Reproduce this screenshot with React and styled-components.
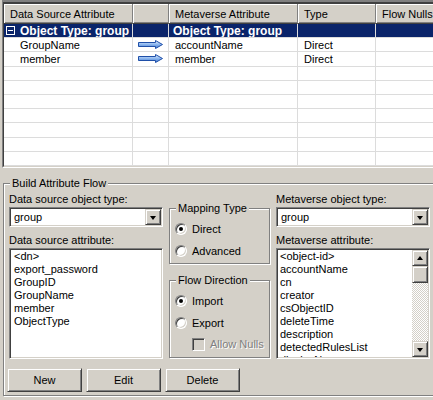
import React from "react";
import styled, { createGlobalStyle } from "styled-components";

const GlobalStyle = createGlobalStyle`
  html, body { margin: 0; padding: 0; background: #d4d0c8; }
  body {
    font-family: "Liberation Sans", Arial, sans-serif;
    font-size: 11px;
    color: #000;
  }
`;

const Window = styled.div`
  width: 433px;
  height: 400px;
  overflow: hidden;
  background: #d4d0c8;
`;

/* ---------- attribute flow grid ---------- */

const GridOuter = styled.div`
  margin-left: 2px;
  width: 470px;
  height: 168px;
  box-sizing: border-box;
  border-top: 2px solid #808080;
  border-left: 1px solid #808080;
  border-bottom: 1px solid #fff;
`;

const GridInner = styled.div`
  height: 100%;
  box-sizing: border-box;
  border-top: 2px solid #404040;
  border-left: 1px solid #404040;
  border-bottom: 1px solid #d4d0c8;
  background: #fff;
  overflow: hidden;
`;

const HeaderRow = styled.div`
  display: flex;
  height: 20px;
`;

const HeaderCell = styled.div`
  flex: none;
  width: ${(p) => p.$w}px;
  box-sizing: border-box;
  display: flex;
  align-items: center;
  padding-left: 6px;
  background: #d4d0c8;
  border-right: 1px solid #808080;
  border-bottom: 1px solid #404040;
  box-shadow: inset 1px 1px #fff, inset 0 -1px #808080;
  white-space: nowrap;
  overflow: hidden;
`;

const Row = styled.div`
  display: flex;
  height: 14.2px;
  box-sizing: border-box;
  border-bottom: 1px solid #dcdcdc;
  background: ${(p) => (p.$selected ? "#0a246a" : "#fff")};
  color: ${(p) => (p.$selected ? "#fff" : "#000")};
  font-weight: ${(p) => (p.$selected ? "bold" : "normal")};
  font-size: ${(p) => (p.$selected ? "12px" : "11px")};
`;

const Cell = styled.div`
  flex: none;
  width: ${(p) => p.$w}px;
  box-sizing: border-box;
  display: flex;
  align-items: center;
  justify-content: ${(p) => (p.$center ? "center" : "flex-start")};
  padding-left: ${(p) => (p.$center ? 0 : p.$pad ?? 6)}px;
  border-right: 1px solid #dcdcdc;
  white-space: nowrap;
  overflow: hidden;
`;

const Collapse = styled.span`
  position: relative;
  flex: none;
  width: 9px;
  height: 9px;
  box-sizing: border-box;
  border: 1px solid #fff;
  margin: 0 5px 0 2px;

  &::after {
    content: "";
    position: absolute;
    left: 1px;
    top: 3px;
    width: 5px;
    height: 1px;
    background: #fff;
  }
`;

const Arrow = () => (
  <svg width="25" height="9" viewBox="0 0 25 9">
    <defs>
      <linearGradient id="arr" x1="0" y1="0" x2="0" y2="1">
        <stop offset="0" stopColor="#e8f2ff" />
        <stop offset="0.5" stopColor="#8cb6ee" />
        <stop offset="1" stopColor="#3c74cc" />
      </linearGradient>
    </defs>
    <path
      d="M0.5 2.5 H17.5 V0.5 L24.5 4.5 L17.5 8.5 V6.5 H0.5 Z"
      fill="url(#arr)"
      stroke="#1f4fa8"
      strokeWidth="1"
    />
  </svg>
);

/* ---------- build attribute flow ---------- */

const GroupBox = styled.div`
  position: relative;
  box-sizing: border-box;
  border: 1px solid #808080;
  box-shadow: inset 1px 1px #fff, 1px 1px #fff;
`;

const MainBox = styled(GroupBox)`
  margin: 15px 0 0 3px;
  width: 470px;
  padding: 9px 0 3px 5px;
`;

const SmallBox = styled(GroupBox)`
  margin-top: ${(p) => p.$top}px;
  padding: 9px 0 ${(p) => p.$bottom}px 5px;
`;

const Legend = styled.span`
  position: absolute;
  top: -7px;
  left: 6px;
  padding: 0 2px;
  line-height: 13px;
  background: #d4d0c8;
  white-space: nowrap;
`;

const Columns = styled.div`
  display: flex;
  gap: 6px;
`;

const Column = styled.div`
  display: flex;
  flex-direction: column;
  width: ${(p) => p.$w}px;
`;

const Label = styled.div`
  height: 13px;
  line-height: 13px;
  margin-top: ${(p) => p.$top || 0}px;
  margin-bottom: 1px;
  white-space: nowrap;
`;

const sunken = `
  border: 1px solid;
  border-color: #808080 #fff #fff #808080;
  box-shadow: inset 1px 1px #404040, inset -1px -1px #d4d0c8;
`;

const raised = `
  background: #d4d0c8;
  border: 1px solid;
  border-color: #d4d0c8 #404040 #404040 #d4d0c8;
  box-shadow: inset 1px 1px #fff, inset -1px -1px #808080;
`;

const Combo = styled.div`
  ${sunken}
  display: flex;
  align-items: center;
  height: 20px;
  box-sizing: border-box;
  padding: 1px;
  background: #fff;
`;

const ComboText = styled.span`
  flex: 1;
  padding-left: 3px;
`;

const ArrowButton = styled.div`
  ${raised}
  flex: none;
  width: 16px;
  height: 16px;
  box-sizing: border-box;
  display: flex;
  align-items: center;
  justify-content: center;

  &::after {
    content: "";
    width: 0;
    height: 0;
    border-left: 3.5px solid transparent;
    border-right: 3.5px solid transparent;
    ${(p) =>
      p.$up
        ? "border-bottom: 4px solid #000; margin-top: -1px;"
        : "border-top: 4px solid #000; margin-top: 1px;"}
  }
`;

const ListBox = styled.div`
  ${sunken}
  display: flex;
  height: 111px;
  box-sizing: border-box;
  padding: 1px;
  background: #fff;
`;

const Items = styled.div`
  flex: 1;
  padding-left: ${(p) => p.$pad}px;
  overflow: hidden;
`;

const Item = styled.div`
  height: 13px;
  line-height: 13px;
  white-space: nowrap;
`;

const ScrollBar = styled.div`
  flex: none;
  width: 16px;
  display: flex;
  flex-direction: column;
`;

const Thumb = styled.div`
  ${raised}
  height: 17px;
  box-sizing: border-box;
`;

const Track = styled.div`
  flex: 1;
  background: repeating-conic-gradient(#d4d0c8 0 25%, #fff 0 50%) 0 0 / 2px 2px;
`;

const OptionRow = styled.div`
  display: flex;
  align-items: center;
  height: ${(p) => p.$h || 22}px;
  white-space: nowrap;
  color: ${(p) => (p.$disabled ? "#808080" : "#000")};
  text-shadow: ${(p) => (p.$disabled ? "1px 1px #fff" : "none")};
`;

const Radio = styled.span`
  position: relative;
  flex: none;
  width: 12px;
  height: 12px;
  box-sizing: border-box;
  margin-right: 5px;
  border-radius: 50%;
  border: 1px solid;
  border-color: #808080 #fff #fff #808080;
  box-shadow: inset 1px 1px #404040, inset -1px -1px #d4d0c8;
  background: #fff;

  &::after {
    content: "";
    display: ${(p) => (p.$checked ? "block" : "none")};
    position: absolute;
    left: 3px;
    top: 3px;
    width: 4px;
    height: 4px;
    border-radius: 50%;
    background: #000;
  }
`;

const CheckBox = styled.span`
  flex: none;
  width: 13px;
  height: 13px;
  box-sizing: border-box;
  margin: 0 5px 0 17px;
  ${sunken}
  background: #d4d0c8;
`;

const ButtonRow = styled.div`
  display: flex;
  gap: 4px;
  margin: 9px 0 0 -2px;
`;

const PushButton = styled.div`
  ${raised}
  width: 75px;
  height: 24px;
  box-sizing: border-box;
  display: flex;
  align-items: center;
  justify-content: center;
`;

const cols = [129, 36, 129, 78, 98];

const flows = [
  { src: "GroupName", mv: "accountName", type: "Direct" },
  { src: "member", mv: "member", type: "Direct" },
];

const sourceAttrs = ["<dn>", "export_password", "GroupID", "GroupName", "member", "ObjectType"];

const mvAttrs = [
  "<object-id>",
  "accountName",
  "cn",
  "creator",
  "csObjectID",
  "deleteTime",
  "description",
  "detectedRulesList",
  "displayName",
];

const App = () => {
  return (
    <Window>
      <GlobalStyle />
      <GridOuter>
        <GridInner>
          <HeaderRow>
            <HeaderCell $w={cols[0]}>Data Source Attribute</HeaderCell>
            <HeaderCell $w={cols[1]} />
            <HeaderCell $w={cols[2]}>Metaverse Attribute</HeaderCell>
            <HeaderCell $w={cols[3]}>Type</HeaderCell>
            <HeaderCell $w={cols[4]}>Flow Nulls</HeaderCell>
          </HeaderRow>
          <Row $selected>
            <Cell $w={cols[0]} $pad={0}>
              <Collapse />
              Object Type: group
            </Cell>
            <Cell $w={cols[1]} />
            <Cell $w={cols[2]} $pad={4}>Object Type: group</Cell>
            <Cell $w={cols[3]} />
            <Cell $w={cols[4]} />
          </Row>
          {flows.map((f) => (
            <Row key={f.src}>
              <Cell $w={cols[0]} $pad={16}>{f.src}</Cell>
              <Cell $w={cols[1]} $center>
                <Arrow />
              </Cell>
              <Cell $w={cols[2]}>{f.mv}</Cell>
              <Cell $w={cols[3]}>{f.type}</Cell>
              <Cell $w={cols[4]} />
            </Row>
          ))}
          {Array.from({ length: 8 }).map((_, i) => (
            <Row key={i}>
              {cols.map((w, j) => (
                <Cell key={j} $w={w} />
              ))}
            </Row>
          ))}
        </GridInner>
      </GridOuter>

      <MainBox>
        <Legend>Build Attribute Flow</Legend>
        <Columns>
          <Column $w={154}>
            <Label>Data source object type:</Label>
            <Combo>
              <ComboText>group</ComboText>
              <ArrowButton />
            </Combo>
            <Label $top={7}>Data source attribute:</Label>
            <ListBox>
              <Items $pad={3}>
                {sourceAttrs.map((a) => (
                  <Item key={a}>{a}</Item>
                ))}
              </Items>
            </ListBox>
          </Column>

          <Column $w={101}>
            <SmallBox $top={15} $bottom={1}>
              <Legend>Mapping Type</Legend>
              <OptionRow>
                <Radio $checked />
                Direct
              </OptionRow>
              <OptionRow>
                <Radio />
                Advanced
              </OptionRow>
            </SmallBox>
            <SmallBox $top={16} $bottom={3}>
              <Legend>Flow Direction</Legend>
              <OptionRow>
                <Radio $checked />
                Import
              </OptionRow>
              <OptionRow>
                <Radio />
                Export
              </OptionRow>
              <OptionRow $h={20} $disabled>
                <CheckBox />
                Allow Nulls
              </OptionRow>
            </SmallBox>
          </Column>

          <Column $w={154}>
            <Label>Metaverse object type:</Label>
            <Combo>
              <ComboText>group</ComboText>
              <ArrowButton />
            </Combo>
            <Label $top={7}>Metaverse attribute:</Label>
            <ListBox>
              <Items $pad={2}>
                {mvAttrs.map((a) => (
                  <Item key={a}>{a}</Item>
                ))}
              </Items>
              <ScrollBar>
                <ArrowButton $up />
                <Thumb />
                <Track />
                <ArrowButton />
              </ScrollBar>
            </ListBox>
          </Column>
        </Columns>
        <ButtonRow>
          <PushButton>New</PushButton>
          <PushButton>Edit</PushButton>
          <PushButton>Delete</PushButton>
        </ButtonRow>
      </MainBox>
    </Window>
  );
};

export default App;
